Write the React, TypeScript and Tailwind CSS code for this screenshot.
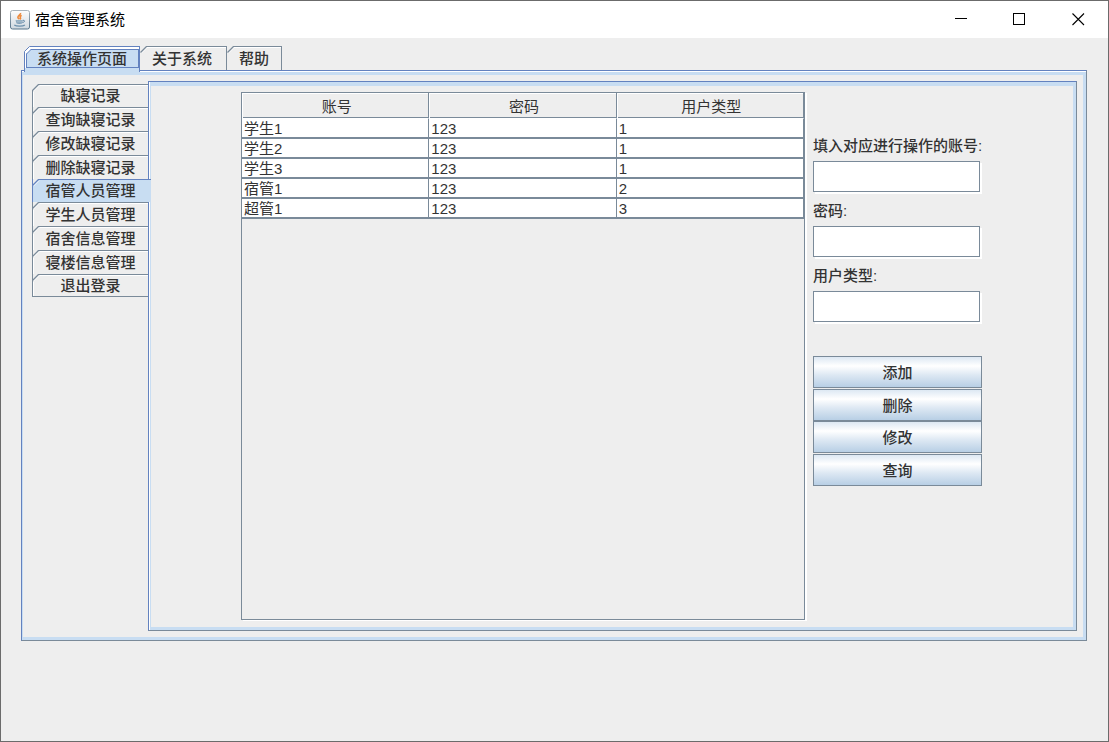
import { useState } from "react";

const topTabs = [
  { label: "系统操作页面", padding: "pl-[10px] pr-[11px]" },
  { label: "关于系统", padding: "pl-3 pr-[14px]" },
  { label: "帮助", padding: "px-3" },
];

const sideTabs = [
  { label: "缺寝记录", height: "h-[23px]" },
  { label: "查询缺寝记录", height: "h-6" },
  { label: "修改缺寝记录", height: "h-6" },
  { label: "删除缺寝记录", height: "h-6" },
  { label: "宿管人员管理", height: "h-[23px]" },
  { label: "学生人员管理", height: "h-6" },
  { label: "宿舍信息管理", height: "h-6" },
  { label: "寝楼信息管理", height: "h-6" },
  { label: "退出登录", height: "h-[22px]" },
];

const columns = ["账号", "密码", "用户类型"];

const rows = [
  ["学生1", "123", "1"],
  ["学生2", "123", "1"],
  ["学生3", "123", "1"],
  ["宿管1", "123", "2"],
  ["超管1", "123", "3"],
];

const fields = [
  { id: "account", label: "填入对应进行操作的账号:" },
  { id: "password", label: "密码:" },
  { id: "type", label: "用户类型:" },
];

const actions = ["添加", "删除", "修改", "查询"];

function JavaIcon() {
  return (
    <svg width="20" height="20" viewBox="0 0 20 20" aria-hidden="true">
      <defs>
        <linearGradient id="tile" x1="0" y1="0" x2="0" y2="1">
          <stop offset="0" stopColor="#fdfdfd" />
          <stop offset="1" stopColor="#cfd8e0" />
        </linearGradient>
        <linearGradient id="edge" x1="0" y1="0" x2="0" y2="1">
          <stop offset="0" stopColor="#a9b3bb" />
          <stop offset="1" stopColor="#557389" />
        </linearGradient>
      </defs>
      <rect x="0.5" y="0.5" width="19" height="18.5" rx="2" fill="url(#tile)" stroke="url(#edge)" />
      <path d="M10.500 3c.6 1.700-2.600 2.400-2.600 4.200 0 1 .9 1.300 1.200 2.100M11.700 5.500c-1.600.6-2 1.300-1.300 2.200.4.600.2 1.100-.4 1.600" fill="none" stroke="#ee8a3c" strokeWidth="1.600" />
      <path d="M5.500 10.300H12.800L12 13.600C10.500 14.200 8 14.200 6.600 13.600z" fill="#7d9cb5" />
      <path d="M6.500 11.900h5.600" stroke="#cbd8e2" strokeWidth="0.700" />
      <path d="M12.800 10.300c2.400-.4 2.400 1.800-.4 2.300" fill="none" stroke="#5d84a3" strokeWidth="1" />
      <path d="M4.300 14.900c2 1.500 8.600 1.500 10.600 0" fill="none" stroke="#6c90ac" strokeWidth="1.300" />
    </svg>
  );
}

function TitleBar() {
  const control = "flex h-full w-[59px] items-center justify-center";
  return (
    <header className="flex h-[37px] items-center bg-white pl-[9px] text-black">
      <JavaIcon />
      <h1 className="ml-[5px] flex-1 text-[15px] leading-5">宿舍管理系统</h1>
      <button type="button" aria-label="最小化" className={control}>
        <svg width="13" height="13" viewBox="0 0 13 13" shapeRendering="crispEdges">
          <path d="M1 5.500h12" stroke="#000" />
        </svg>
      </button>
      <button type="button" aria-label="最大化" className={control}>
        <svg width="13" height="13" viewBox="0 0 13 13" shapeRendering="crispEdges">
          <rect x="0.5" y="0.500" width="11" height="11" fill="none" stroke="#000" />
        </svg>
      </button>
      <button type="button" aria-label="关闭" className={control}>
        <svg width="13" height="13" viewBox="0 0 13 13">
          <path d="M0.500 0.500l11.500 11.500M12 0.500L0.500 12" stroke="#000" strokeWidth="1.100" />
        </svg>
      </button>
    </header>
  );
}

function Corner({ color, fill, first }: { color: string; fill: string; first?: boolean }) {
  return (
    <svg className="absolute -top-px -left-px" width="8" height="8" viewBox="0 0 8 8" aria-hidden="true">
      <rect x={first ? 0 : 1} y="0" width={first ? 6 : 5} height="6" fill="#eeeeee" shapeRendering="crispEdges" />
      <path d="M1 7L7 1H8V8H1z" fill={fill} />
      <path d="M1.500 7L7 1.500" stroke="#fff" />
      <path d="M0.500 6.500L6.500 0.500" stroke={color} strokeWidth="1.200" />
    </svg>
  );
}

function TopTabs() {
  const [active, setActive] = useState(0);
  return (
    <div role="tablist" className="flex h-6 pl-[3px] font-medium">
      {topTabs.map(({ label, padding }, i) =>
        i === active ? (
          <button
            key={label}
            type="button"
            role="tab"
            aria-selected="true"
            onClick={() => setActive(i)}
            className="relative z-10 h-[26px] border-t border-r border-l border-[#6382bf] bg-[#c8ddf2] pb-1"
          >
            <span className="flex h-full border-t-2 border-l border-white">
              <span className={`flex items-center border border-[#6382bf] leading-4 ${padding}`}>{label}</span>
            </span>
            <svg className="absolute -top-px -left-px" width="10" height="10" viewBox="0 0 10 10" aria-hidden="true">
              <path d="M0 0H10V3H7L2 8V10H0z" fill="#fff" />
              <path d="M0 0H6L0 6z" fill="#eeeeee" />
              <path d="M0.500 10V5.500L5.500 0.500H10M2.500 10V8L7 3.500H10" fill="none" stroke="#6382bf" />
            </svg>
          </button>
        ) : (
          <button
            key={label}
            type="button"
            role="tab"
            aria-selected="false"
            onClick={() => setActive(i)}
            className={`relative h-6 border-t border-r border-[#7a8a99] leading-[22px] shadow-[inset_0_1px_0_#fff] ${padding}`}
          >
            {label}
            <svg className="absolute -top-px left-0" width="8" height="8" viewBox="0 0 8 8" aria-hidden="true">
              <path d="M0 0H6V2H0z" fill="#eeeeee" />
              <path d="M1.500 7L7 1.500" stroke="#fff" />
              <path d="M0.500 6.500L6.500 0.500" stroke="#7a8a99" strokeWidth="1.200" />
            </svg>
          </button>
        )
      )}
    </div>
  );
}

function SideTabs() {
  const [active, setActive] = useState(4);
  return (
    <div role="tablist" aria-orientation="vertical" className="mt-[3px] flex w-[116px] shrink-0 flex-col self-start border-b border-[#7a8a99] font-medium">
      {sideTabs.map(({ label, height }, i) => {
        const on = i === active;
        const look = on
          ? "z-10 -mr-[3px] border-[#6382bf] bg-[#c8ddf2] pr-[3px]"
          : "border-[#7a8a99] shadow-[inset_1px_1px_0_#fff]";
        return (
          <button
            key={label}
            type="button"
            role="tab"
            aria-selected={on}
            onClick={() => setActive(i)}
            className={`relative shrink-0 border-t border-l text-center leading-[22px] ${height} ${look}`}
          >
            {label}
            <Corner color={on ? "#6382bf" : "#7a8a99"} fill={on ? "#c8ddf2" : "#eeeeee"} first={i === 0} />
          </button>
        );
      })}
    </div>
  );
}

function AccountTable() {
  return (
    <div className="min-w-0 flex-1 border border-[#7a8a99] shadow-[2px_1px_0_#fff]">
      <table className="w-full table-fixed border-separate border-spacing-0">
        <thead>
          <tr className="h-[26px]">
            {columns.map((c) => (
              <th
                key={c}
                scope="col"
                className="border-r border-b border-r-[#7a8a99] border-b-white pt-[3px] pr-0 pb-0 pl-[3px] text-center leading-[22px] font-normal shadow-[inset_1px_1px_0_#fff,inset_0_-1px_0_#7a8a99]"
              >
                {c}
              </th>
            ))}
          </tr>
        </thead>
        <tbody>
          {rows.map((row) => (
            <tr key={row[0]} className="h-5">
              {row.map((cell, i) => (
                <td key={i} className="border-r border-b-2 border-[#7a8a99] bg-white pt-px pr-0 pb-0 pl-[2px] leading-[17px]">
                  {cell}
                </td>
              ))}
            </tr>
          ))}
        </tbody>
      </table>
    </div>
  );
}

function AccountForm() {
  return (
    <form className="ml-2 w-[169px] shrink-0 pt-[42px] font-medium" onSubmit={(e) => e.preventDefault()}>
      {fields.map(({ id, label }) => (
        <div key={id} className="mb-[7px]">
          <label htmlFor={id} className="block h-[27px] leading-6 whitespace-nowrap">
            {label}
          </label>
          <input
            id={id}
            type="text"
            className="block h-[31px] w-[167px] border border-[#7a8a99] bg-white px-1 font-normal shadow-[2px_2px_0_#fff] outline-none"
          />
        </div>
      ))}
      <div className="pt-[27px]">
        {actions.map((a) => (
          <button
            key={a}
            type="button"
            className="block h-8 w-full border border-[#7a8a99] bg-[linear-gradient(#dde8f3,#ffffff_30%,#dde8f3_60%,#b8cfe5)] pt-[2px] leading-7 odd:mb-px"
          >
            {a}
          </button>
        ))}
      </div>
    </form>
  );
}

export default function App() {
  return (
    <div className="flex min-h-screen flex-col border border-[#6b6b6b] bg-[#eeeeee] font-['Liberation_Sans','Noto_Sans_CJK_SC',sans-serif] text-[15px] text-[#333333]">
      <TitleBar />
      <main className="flex flex-1 flex-col pt-2 pr-[21px] pb-[100px] pl-[20px]">
        <TopTabs />
        <div className="flex flex-1 border border-[#6382bf] border-r-[#7a8a99] border-b-[#7a8a99]">
          <div className="flex flex-1 border-t border-white">
            <div className="flex flex-1 border-3 border-l border-[#c8ddf2] pt-[6px] pr-[6px] pb-[6px] pl-[9px]">
              <SideTabs />
              <div className="flex min-w-0 flex-1 border border-[#6382bf] border-r-[#7a8a99] border-b-[#7a8a99]">
                <div className="flex min-w-0 flex-1 border-l border-white">
                  <div className="flex min-w-0 flex-1 border-t-4 border-r-3 border-b-3 border-l border-[#c8ddf2] pt-[6px] pr-[91px] pb-[7px] pl-[90px]">
                    <AccountTable />
                    <AccountForm />
                  </div>
                </div>
              </div>
            </div>
          </div>
        </div>
      </main>
    </div>
  );
}
